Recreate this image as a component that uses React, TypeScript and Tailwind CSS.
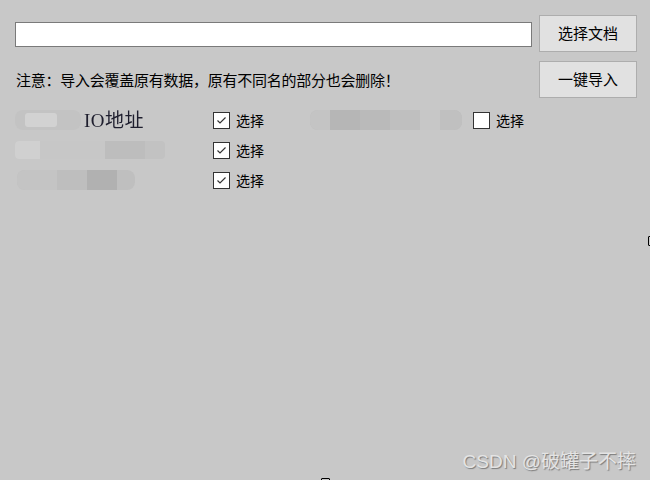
import React from "react";

const cjk = "font-['Noto_Sans_CJK_SC',sans-serif]";

function Check({ checked }: { checked: boolean }) {
  return (
    <div className="w-[17px] h-[17px] border border-[#333333] bg-white flex items-center justify-center">
      {checked && (
        <svg width="13" height="13" viewBox="0 0 13 13">
          <path d="M2.5 6.5 L5 9 L10.5 3.5" fill="none" stroke="#333333" strokeWidth="1.2" />
        </svg>
      )}
    </div>
  );
}

function CheckCell({ checked }: { checked: boolean }) {
  return (
    <div className="flex items-center gap-[6px]">
      <Check checked={checked} />
      <span className={`${cjk} text-[14px] text-black leading-none`}>选择</span>
    </div>
  );
}

export default function App() {
  return (
    <div className="relative w-[650px] h-[480px] bg-[#c8c8c8] overflow-hidden">
      <div className="flex flex-col pl-[15px] pt-[15px]">
        <div className="flex items-start">
          <div className="mt-[7px] w-[517px] h-[25px] bg-white border border-[#7a7a7a]" />
          <button className={`ml-[7px] w-[98px] h-[37px] bg-[#e1e1e1] border border-[#adadad] ${cjk} text-[15px] text-black`}>
            选择文档
          </button>
        </div>
        <div className="flex items-center mt-[9px]">
          <div className={`w-[524px] pl-[1px] ${cjk} text-[15px] tracking-[-0.25px] text-black leading-none`}>
            注意：导入会覆盖原有数据，原有不同名的部分也会删除！
          </div>
          <button className={`w-[98px] h-[37px] bg-[#e1e1e1] border border-[#adadad] ${cjk} text-[15px] text-black`}>
            一键导入
          </button>
        </div>

        <div className="flex mt-[7px]">
          <div className="flex flex-col w-[295px]">
            <div className="flex items-center h-[30px]">
              <div className="w-[198px] flex items-center">
                <div className="w-[66px] h-[20px] rounded-[8px] bg-[#c3c3c3] flex items-center px-[10px]">
                  <div className="w-[32px] h-[14px] bg-[#d2d2d2] rounded-[3px]" />
                </div>
                <span className="ml-[3px] font-['Liberation_Serif','Noto_Sans_CJK_SC',serif] text-[19px] tracking-[0.5px] text-[#1e1e2e] leading-none blur-[0.3px]">IO地址</span>
              </div>
              <CheckCell checked />
            </div>
            <div className="flex items-center h-[30px]">
              <div className="w-[198px] flex items-center">
                <div className="w-[150px] h-[18px] rounded-[4px] bg-[#c2c2c2] flex">
                  <div className="w-[25px] bg-[#d0d0d0] rounded-l-[4px]" />
                  <div className="w-[65px] bg-[#c7c7c7]" />
                  <div className="w-[40px] bg-[#bdbdbd]" />
                </div>
              </div>
              <CheckCell checked />
            </div>
            <div className="flex items-center h-[30px]">
              <div className="w-[198px] flex items-center">
                <div className="ml-[2px] w-[118px] h-[20px] rounded-[8px] bg-[#bfbfbf] flex overflow-hidden">
                  <div className="w-[40px] bg-[#c4c4c4]" />
                  <div className="w-[30px] bg-[#bebebe]" />
                  <div className="w-[30px] bg-[#b1b1b1]" />
                </div>
              </div>
              <CheckCell checked />
            </div>
          </div>
          <div className="flex flex-col">
            <div className="flex items-center h-[30px]">
              <div className="w-[163px] flex items-center">
                <div className="w-[152px] h-[20px] rounded-[8px] bg-[#bebebe] flex overflow-hidden">
                  <div className="w-[20px] bg-[#c4c4c4]" />
                  <div className="w-[30px] bg-[#b6b6b6]" />
                  <div className="w-[30px] bg-[#bababa]" />
                  <div className="w-[30px] bg-[#bfbfbf]" />
                  <div className="w-[20px] bg-[#c7c7c7]" />
                  <div className="w-[22px] bg-[#c0c0c0]" />
                </div>
              </div>
              <CheckCell checked={false} />
            </div>
          </div>
        </div>
      </div>

      <div className="absolute right-[14px] bottom-[9px] font-['Liberation_Sans','Noto_Sans_CJK_SC',sans-serif] text-[19px] text-[#e4e4e4] leading-none [text-shadow:1px_1px_1px_#7a7a7a]">
        CSDN @破罐子不摔
      </div>
      <div className="absolute left-[648px] top-[236px] w-[4px] h-[10px] border border-black rounded-[1px]" />
      <div className="absolute left-[321px] top-[478px] w-[9px] h-[4px] border border-black rounded-[1px]" />
    </div>
  );
}
